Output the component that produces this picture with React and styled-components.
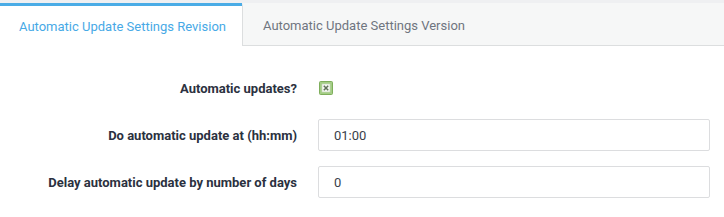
import styled, { createGlobalStyle } from "styled-components";

const GlobalStyle = createGlobalStyle`
  body {
    margin: 0;
    background: #fff;
    font-family: Roboto, "Liberation Sans", sans-serif;
  }
`;

const Page = styled.div`
  width: 724px;
  height: 217px;
  padding-top: 3px;
  background: linear-gradient(#eff0f2 0 3px, #fff 3px);
  box-sizing: border-box;
`;

const Tabs = styled.div`
  display: flex;
  height: 43px;
`;

const Tab = styled.div`
  display: flex;
  align-items: center;
  box-sizing: border-box;
  min-width: 0;
  white-space: nowrap;
  font-size: 13px;
  padding: 0 ${(p) => (p.active ? "19px" : "20px")};
  color: ${(p) => (p.active ? "#47a9e6" : "#6f7580")};
  background: ${(p) => (p.active ? "#fff" : "#f6f7f7")};
  border-top: 3px solid ${(p) => (p.active ? "#4aace6" : "#f6f7f7")};
  border-bottom: ${(p) => (p.active ? "none" : "1px solid #dcdedf")};
  border-left: ${(p) => (p.active ? "none" : "1px solid #dcdedf")};
  flex: ${(p) => (p.active ? "0 0 242px" : "1")};
`;

const Form = styled.div`
  display: grid;
  grid-template-columns: 297px 392px;
  column-gap: 21px;
  row-gap: 15px;
  padding-top: 32px;
  align-items: center;
`;

const Label = styled.label`
  text-align: right;
  font-weight: 700;
  font-size: 13px;
  color: #2b3140;
  margin-bottom: ${(p) => (p.check ? "6px" : "0")};
`;

const CheckRow = styled.div`
  height: 20px;
  display: flex;
  align-items: center;
  margin-bottom: 6px;
  padding-left: 1px;
`;

const Input = styled.div`
  height: 32px;
  box-sizing: border-box;
  border: 1px solid #dcdddf;
  border-radius: 2px;
  padding: 0 15px;
  display: flex;
  align-items: center;
  font-size: 13px;
  color: #3a3f4a;
`;

const CheckIcon = () => (
  <svg width="14" height="14" viewBox="0 0 14 14">
    <rect x="0.5" y="0.5" width="13" height="13" rx="1" fill="#a3cd84" stroke="#7fae5c" />
    <rect x="3" y="3" width="8" height="8" fill="#f4f7f1" stroke="#c9d6bf" strokeWidth="0.6" />
    <path d="M4.8 4.8 L9.2 9.2 M9.2 4.8 L4.8 9.2" stroke="#5f7058" strokeWidth="1.5" />
  </svg>
);

export default function App() {
  return (
    <>
      <GlobalStyle />
      <Page>
        <Tabs>
          <Tab active>Automatic Update Settings Revision</Tab>
          <Tab>Automatic Update Settings Version</Tab>
        </Tabs>
        <Form>
          <Label check>Automatic updates?</Label>
          <CheckRow>
            <CheckIcon />
          </CheckRow>
          <Label>Do automatic update at (hh:mm)</Label>
          <Input>01:00</Input>
          <Label>Delay automatic update by number of days</Label>
          <Input>0</Input>
        </Form>
      </Page>
    </>
  );
}
